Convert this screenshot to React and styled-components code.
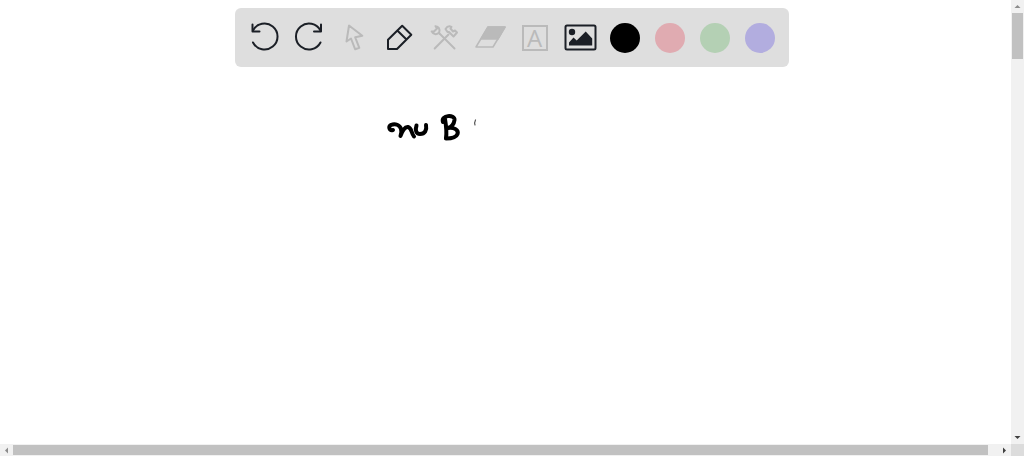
import React, { useState } from "react";
import styled, { createGlobalStyle } from "styled-components";

const colors = [
  { name: "Black", value: "#000000" },
  { name: "Red", value: "#e0abb1" },
  { name: "Green", value: "#b4d0b4" },
  { name: "Purple", value: "#b2addf" },
];

// handwriting on the board, one path per pen stroke
const strokes = [
  "M393 130 C389 131 388 126 391 125 C395 123 400 125 401 129 C402 132 401 134 400.500 136 C402 131 405 126.500 408 127 C412 128 411 133 414 136.500",
  "M416.500 125.500 C415 130 416 134 420 134 C425 134 427 130 426 125",
  "M445 119 C446 125 447 132 446 138",
  "M443 122 C440.500 115 455 114 454.500 120 C454 124 451 127 448 128 C454 127 459 130 457.500 134 C456 138 451 138.500 446 138.500",
];

function Toolbar() {
  const [color, setColor] = useState("#000000");

  return (
    <Bar role="toolbar" aria-label="Drawing tools">
      <Tool aria-label="Undo">
        <Icon viewBox="0 0 45 45">
          <path d="M11 15.500 A13 13 0 1 1 11 27.500" />
          <path d="M10.500 9.500 V16.500 H17.500" />
        </Icon>
      </Tool>
      <Tool aria-label="Redo">
        <Icon viewBox="0 0 45 45">
          <path d="M33.500 15.500 A13 13 0 1 0 33.500 27.500" />
          <path d="M34 9.500 V16.500 H27" />
        </Icon>
      </Tool>
      <Tool aria-label="Select" $muted>
        <Icon viewBox="0 0 45 45">
          <path d="M17 10.500 L14.500 26.500 L19 23.500 L23.200 34.300 L27.300 32.800 L23.200 22.300 L30.300 20.700 Z" />
        </Icon>
      </Tool>
      <Tool aria-label="Pen" aria-pressed="true">
        <Icon viewBox="0 0 45 45">
          <path d="M11 34 V24.700 L25.200 10.700 L34.300 19.700 L20 34 Z M20.300 15.500 L29.500 24.500" />
        </Icon>
      </Tool>
      <Tool aria-label="Tools" $muted>
        <Icon viewBox="0 0 45 45">
          <path d="M13.500 11.200 C16.500 11.500 18.300 14 17.200 17.300 C15.500 20 11.500 20 9.700 16.500 M13.500 11.200 L15 13.500 L12 16.500 L9.700 16.500" />
          <path d="M17.500 18.500 L32.500 33.500" />
          <path d="M12.700 33.500 L26.500 19.500" />
          <path d="M23.500 14 C25 11.500 27.500 10.800 29.500 11.800 L28.500 13.500 L31 16.500 L33 15.500 L35 17.500 L31.500 21.500 L29.500 19.500 L27 17 L25.500 17 Z" />
        </Icon>
      </Tool>
      <Tool aria-label="Eraser" $muted>
        <Icon viewBox="0 0 45 45">
          <path d="M21 12 H38 L26 32 H9 Z" strokeWidth="1.500" />
          <path d="M21 12 H38 L31 24 H14 Z" fill="currentColor" strokeWidth="1.500" />
        </Icon>
      </Tool>
      <Tool aria-label="Text" $muted>
        <Letter>A</Letter>
      </Tool>
      <Tool aria-label="Image">
        <Icon viewBox="0 0 45 45">
          <rect x="8.500" y="10.500" width="30" height="24" rx="1.500" />
          <circle cx="15" cy="17" r="3.200" fill="currentColor" stroke="none" />
          <path
            d="M12 30.500 V27.500 L16.500 22.500 L19.700 25.500 L28.700 16.500 L35.200 23.500 V30.500 Z"
            fill="currentColor"
            stroke="none"
          />
        </Icon>
      </Tool>
      {colors.map((c) => (
        <Tool
          key={c.name}
          aria-label={c.name}
          aria-pressed={color === c.value}
          onClick={() => setColor(c.value)}
        >
          <Swatch $color={c.value} />
        </Tool>
      ))}
    </Bar>
  );
}

function Scrollbar({ vertical, size }) {
  return (
    <Scroll $vertical={vertical}>
      <Arrow aria-label={vertical ? "Scroll up" : "Scroll left"} $muted>
        <svg width="7" height="7" viewBox="0 0 7 7" fill="currentColor">
          <path d={vertical ? "M0.500 5 L3.500 2 L6.500 5 Z" : "M5 0.500 L2 3.500 L5 6.500 Z"} />
        </svg>
      </Arrow>
      <Track>
        <Thumb $vertical={vertical} $size={size} />
      </Track>
      <Arrow aria-label={vertical ? "Scroll down" : "Scroll right"}>
        <svg width="7" height="7" viewBox="0 0 7 7" fill="currentColor">
          <path d={vertical ? "M0.500 2 L3.500 5 L6.500 2 Z" : "M2 0.500 L5 3.500 L2 6.500 Z"} />
        </svg>
      </Arrow>
    </Scroll>
  );
}

function App() {
  return (
    <Page>
      <GlobalStyle />
      <Board>
        <Ink role="img" aria-label="Handwriting">
          {strokes.map((d) => (
            <path key={d} d={d} />
          ))}
          <path d="M475.500 120 C474.500 122 474.500 123.500 475 125" strokeWidth="1.200" />
        </Ink>
      </Board>
      <Scrollbar vertical size="11%" />
      <Scrollbar size="99%" />
      <Corner />
      <Dock>
        <Toolbar />
      </Dock>
    </Page>
  );
}

export default App;

const GlobalStyle = createGlobalStyle`
  * {
    box-sizing: border-box;
  }

  body {
    margin: 0;
    background: #fff;
    font-family: "Open Sans", "Liberation Sans", sans-serif;
  }

  button {
    padding: 0;
    border: none;
    background: transparent;
    font-family: inherit;
    cursor: pointer;
  }
`;

const Page = styled.div`
  height: 100vh;
  display: grid;
  grid-template-columns: 1fr 13px;
  grid-template-rows: 1fr 12px;
  position: relative;
`;

const Board = styled.main`
  min-width: 0;
  min-height: 0;
  overflow: hidden;
`;

const Ink = styled.svg`
  display: block;
  width: 100%;
  height: 100%;
  fill: none;
  stroke: #000;
  stroke-width: 4;
  stroke-linecap: round;
  stroke-linejoin: round;

  path[stroke-width] {
    stroke: #555;
  }
`;

/* floats over the board */
const Dock = styled.div`
  position: absolute;
  top: 8px;
  left: 0;
  right: 0;
  display: flex;
  justify-content: center;
  pointer-events: none;
`;

const Bar = styled.div`
  display: flex;
  padding: 7px;
  border-radius: 6px;
  background: #dedede;
  pointer-events: auto;
`;

const Tool = styled.button`
  width: 45px;
  height: 45px;
  display: grid;
  place-items: center;
  color: ${(props) => (props.$muted ? "#bababa" : "#1b1f26")};
`;

const Icon = styled.svg`
  display: block;
  width: 45px;
  height: 45px;
  fill: none;
  stroke: currentColor;
  stroke-width: 2;
  stroke-linecap: round;
  stroke-linejoin: round;
`;

const Letter = styled.span`
  width: 26px;
  height: 26px;
  display: grid;
  place-items: center;
  border: 2px solid currentColor;
  font-size: 24px;
  line-height: 22px;
`;

const Swatch = styled.span`
  width: 30px;
  height: 30px;
  border-radius: 50%;
  background: ${(props) => props.$color};
`;

const Scroll = styled.div`
  display: flex;
  flex-direction: ${(props) => (props.$vertical ? "column" : "row")};
  padding: ${(props) => (props.$vertical ? "0 1px" : "1px 0")};
  background: #f1f1f1;
`;

const Arrow = styled.button`
  flex: 0 0 13px;
  display: grid;
  place-items: center;
  color: ${(props) => (props.$muted ? "#8c8c8c" : "#404040")};
`;

const Track = styled.div`
  flex: 1;
  min-width: 0;
  min-height: 0;
`;

const Thumb = styled.div`
  width: ${(props) => (props.$vertical ? "100%" : props.$size)};
  height: ${(props) => (props.$vertical ? props.$size : "100%")};
  background: #c1c1c1;
`;

const Corner = styled.div`
  background: #dcdcdc;
`;
